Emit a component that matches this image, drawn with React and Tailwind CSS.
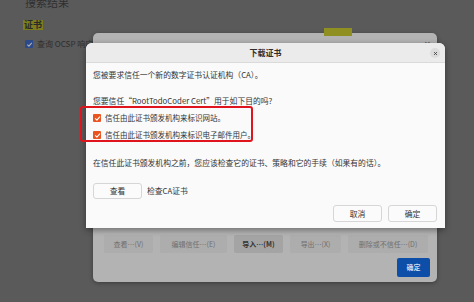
import React from "react";

const font = { fontFamily: '"Noto Sans CJK SC", "Noto Sans", sans-serif' };

const Check = () => (
  <span className="w-[8px] h-[8px] rounded-[1px] bg-[#e95420] flex items-center justify-center shrink-0">
    <svg viewBox="0 0 10 10" className="w-[7px] h-[7px]">
      <path d="M2 5.2 L4.2 7.4 L8.2 2.8" fill="none" stroke="#fff" strokeWidth="1.6" strokeLinecap="round" strokeLinejoin="round" />
    </svg>
  </span>
);

const BgButton = ({ label, w, bold }) => (
  <div
    className={`h-[18px] ${w} rounded-[2px] flex items-center justify-center text-[7px] ${
      bold ? "bg-[#a4a4a4] text-[#353535] font-bold" : "bg-[#adadad] text-[#707070]"
    }`}
  >
    {label}
  </div>
);

const App = () => {
  return (
    <div className="w-[474px] h-[302px] bg-[#5a5a5a] relative overflow-hidden" style={font}>
      {/* dimmed page behind */}
      <div className="pl-[25px] flex flex-col">
        <div className="text-[11px] leading-[11px] mt-[-3px] text-[#2f2f2f]">搜索结果</div>
        <div className="mt-[12px] flex">
          <span className="text-[9px] leading-[10px] font-bold text-[#2a2a2a] bg-[#7d7d1e] px-[1px] ml-[-2px]">证书</span>
        </div>
        <div className="mt-[9px] flex items-center gap-[4px]">
          <span className="w-[8px] h-[8px] rounded-[1px] bg-[#2b4a8c] flex items-center justify-center">
            <svg viewBox="0 0 10 10" className="w-[7px] h-[7px]">
              <path d="M2 5.2 L4.2 7.4 L8.2 2.8" fill="none" stroke="#b0b0b0" strokeWidth="1.6" />
            </svg>
          </span>
          <span className="text-[8px] leading-[10px] text-[#2e2e2e]">查询 OCSP 响应</span>
        </div>
      </div>

      {/* certificate manager (dimmed) */}
      <div className="absolute left-[93px] top-[33px] w-[344px] h-[249px] bg-[#b3b3b3] rounded-[5px] shadow-[0_1px_4px_rgba(0,0,0,0.35)] flex flex-col">
        <div className="h-[22px] flex items-end px-[8px] relative">
          <span className="text-[8px] leading-[10px] text-[#333] font-bold translate-y-[3px]">
            <span className="bg-[#8f8f22]">证书</span>管理器
          </span>
          <span className="absolute right-[6px] top-[5px] text-[8px] text-[#444]">✕</span>
        </div>
        <div className="mt-auto pl-[11px] pr-[9px] flex gap-[7px]">
          <BgButton label="查看…(V)" w="w-[49px]" />
          <BgButton label="编辑信任…(E)" w="w-[67px]" />
          <BgButton label="导入…(M)" w="w-[49px]" bold />
          <BgButton label="导出…(X)" w="w-[51px]" />
          <BgButton label="删除或不信任…(D)" w="w-[80px]" />
        </div>
        <div className="flex justify-end pr-[7px] pb-[5px] pt-[5px]">
          <div className="w-[33px] h-[19px] rounded-[2px] bg-[#0c4ea8] text-[#d0dcef] text-[7px] font-bold flex items-center justify-center">
            确定
          </div>
        </div>
      </div>
      <div className="absolute left-[324px] top-[28px] w-[28px] h-[8px] bg-[#8f8f22]" />

      {/* download certificate dialog */}
      <div className="absolute left-[86px] top-[43px] w-[359px] h-[185px] bg-[#fafafa] rounded-t-[6px] shadow-[0_2px_6px_rgba(0,0,0,0.4)] flex flex-col text-[#333]">
        <div className="h-[20px] bg-[#ebebeb] border-b border-[#dadada] rounded-t-[6px] flex items-center justify-center relative">
          <span className="text-[8px] font-bold text-[#2e2e2e]">下载证书</span>
          <span className="absolute right-[5px] top-[5px] w-[10px] h-[10px] rounded-full bg-[#dcdcdc] flex items-center justify-center">
            <svg viewBox="0 0 10 10" className="w-[5px] h-[5px]">
              <path d="M2 2 L8 8 M8 2 L2 8" stroke="#333" strokeWidth="1.5" />
            </svg>
          </span>
        </div>
        <div className="pl-[7px] flex flex-col text-[7.8px] leading-[10px]">
          <div className="mt-[7px]">您被要求信任一个新的数字证书认证机构（CA）。</div>
          <div className="mt-[16px]">您要信任“RootTodoCoder Cert”用于如下目的吗?</div>
          <div className="relative mt-[7px] flex flex-col gap-[7px] text-[7.5px]">
            <div className="absolute left-[-13px] top-[-7px] w-[173px] h-[36px] border-2 border-[#e0141c] rounded-[3px]" />
            <div className="flex items-center gap-[4px]">
              <Check />
              <span>信任由此证书颁发机构来标识网站。</span>
            </div>
            <div className="flex items-center gap-[4px]">
              <Check />
              <span>信任由此证书颁发机构来标识电子邮件用户。</span>
            </div>
          </div>
          <div className="mt-[18px]">在信任此证书颁发机构之前，您应该检查它的证书、策略和它的手续（如果有的话）。</div>
          <div className="mt-[15px] flex items-center gap-[5px]">
            <div className="w-[49px] h-[16px] rounded-[3px] border border-[#d6d6d6] bg-[#fbfbfb] flex items-center justify-center">查看</div>
            <span>检查CA证书</span>
          </div>
        </div>
        <div className="mt-auto flex justify-end gap-[6px] pr-[8px] pb-[6px]">
          <div className="w-[49px] h-[17px] rounded-[3px] border border-[#d6d6d6] bg-[#fbfbfb] text-[7.8px] flex items-center justify-center">取消</div>
          <div className="w-[49px] h-[17px] rounded-[3px] border border-[#d6d6d6] bg-[#fbfbfb] text-[7.8px] flex items-center justify-center">确定</div>
        </div>
      </div>
    </div>
  );
};

export default App;
